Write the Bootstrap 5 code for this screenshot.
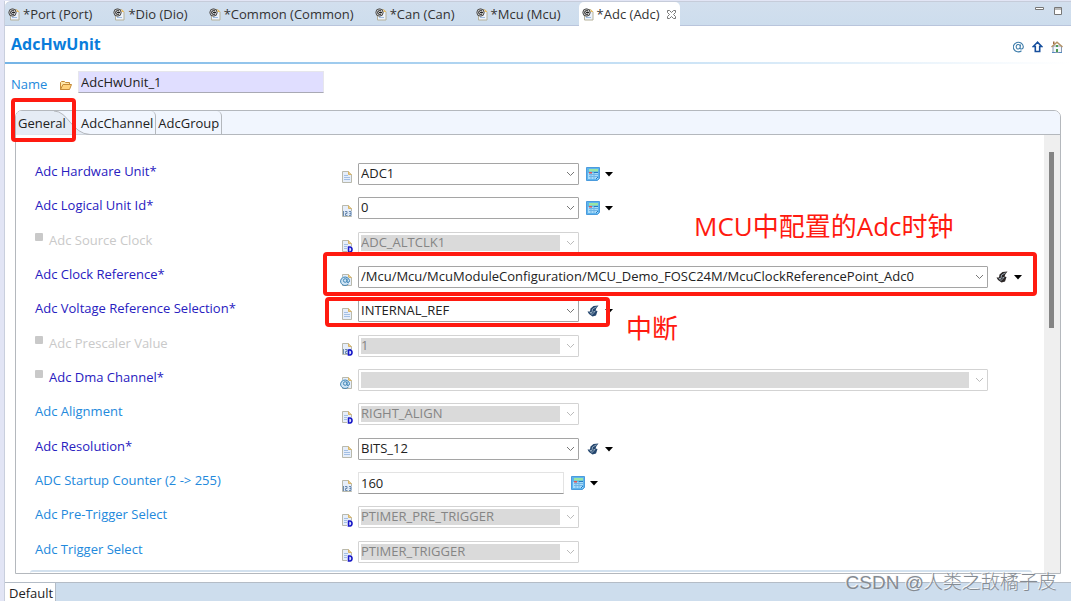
<!DOCTYPE html>
<html lang="en">
<head>
<meta charset="utf-8">
<meta name="viewport" content="width=device-width, initial-scale=1">
<title>AdcHwUnit</title>
<link href="https://cdn.jsdelivr.net/npm/bootstrap@5.3.0/dist/css/bootstrap.min.css" rel="stylesheet">
<style>
:root{--strip:#cddded;--edge:#b4b8bd;--mark:#ff1a10;--ui:"Open Sans","Noto Sans CJK SC",sans-serif}
body{background:#e2e5f5;font-family:var(--ui);font-size:13px;line-height:20px;color:#222;padding:1px 0 0 4px}
button,input,select{font:inherit;color:inherit}
svg{display:block;flex:none}
.editor{min-height:calc(100vh - 1px);background:#fff;border-left:1px solid #c9cfdd}
.editor-tabs{height:25px;background:linear-gradient(#d2dfee,var(--strip));border-top:1px solid #c6ccda;border-bottom:1px solid #b9c5dc;border-radius:6px 0 0 0}
.etab{border:0;background:none;padding:0 18px 0 3px;height:24px;gap:3px;color:#333;white-space:nowrap}
.etab.current{background:#fff;border-radius:5px 5px 0 0;padding-right:4px}
.win-tools{padding:3px 6px 0 0}
.head{padding:7px 8px 0 6px;height:36px}
.head h1{font-size:16px;line-height:22px;font-weight:700;color:#0a7ddb;margin:0}
.rule{height:2px;background:linear-gradient(90deg,#74b4e6,#fff)}
.c-blue{color:#2389dc}.c-req{color:#2820c0}.c-off{color:#c9c9c9}
.name-row{padding:7px 6px 0;height:46px}
.name-row label{width:49px;padding-top:3px}
.name-field{width:246px;height:22px;border:1px solid #e6e6ec;border-bottom:1px solid #a9a9b4;background:#e0deff;padding:0 2px;margin-left:6px}
.folder{margin:0 10px;border:1px solid var(--edge);border-radius:7px 7px 0 0}
.folder-tabs{height:24px;background:#f1f6fe;border-bottom:1px solid var(--edge);border-radius:6px 6px 0 0}
.ftab{border:0;background:none;padding:0 2px;height:24px}
.ftab.edge{border-right:1px solid var(--edge);border-radius:0 5px 0 0}
.ftab.first{width:63px;text-align:left;position:relative}
.curve{position:absolute;left:0;top:0;pointer-events:none}
.pane{padding:28px 0 0 19px}
.prop{height:34px}
.prop:nth-child(3n+2){height:35px}
.prop:last-child{height:28px}
.prop label,.lab{width:304px;line-height:16px}
.prop .lab label{width:auto}
.lab input{appearance:none;width:8px;height:8px;margin:1px 6px 0 0;background:#c9c9c9;border-radius:1px}
.kind{margin:7px 5px 0 0}
.combo{appearance:none;width:221px;height:22px;border:1px solid #a5a5a5;border-radius:1px;padding:0 20px 2px 2px;line-height:18px;color:#222;background:#fff url("data:image/svg+xml,%3Csvg xmlns='http://www.w3.org/2000/svg' width='9' height='6'%3E%3Cpath d='M1 1l3.5 3.5L8 1' fill='none' stroke='%23777'/%3E%3C/svg%3E") no-repeat right 3px center}
.combo:disabled{opacity:1;color:#858585;border-color:#d3d3d3;background:url("data:image/svg+xml,%3Csvg xmlns='http://www.w3.org/2000/svg' width='9' height='6'%3E%3Cpath d='M1 1l3.5 3.5L8 1' fill='none' stroke='%23bbb'/%3E%3C/svg%3E") no-repeat right 3px center,linear-gradient(#dadada,#dadada) no-repeat 2px 2px/calc(100% - 20px) calc(100% - 4px) #fff}
.combo.wide{flex:1 1 0;min-width:0}
.num{width:206px;height:22px;border:1px solid #e3e3e3;border-bottom-color:#999;padding:0 2px}
.act{border:0;background:none;padding:0;height:22px;margin-left:7px;gap:5px}
.tail{width:56px}
.track{width:16px;background:#efefef;padding-top:17px}
.thumb{width:5px;height:176px;background:#858585;margin-left:5px}
.next-group{border-top:2px solid #d3e1ee;border-radius:3px 3px 0 0;margin:1px 12px 0 14px;height:3px}
.foot{height:21px;margin-top:8px;background:var(--strip);border-top:1px solid #b4bcc6}
.foot button{border:0;background:#fff;border-right:1px solid #b4bcc6;padding:0 2px 0 4px;height:20px}
.frame{position:absolute;border:4px solid var(--mark);border-radius:4px;pointer-events:none}
.note{position:absolute;color:var(--mark);font-size:26px;line-height:32px;white-space:nowrap}
.f-tab{left:-5px;top:-13px;width:65px;height:44px}
.f-clock{left:288px;right:7px;top:-14px;height:44px}
.f-volt{left:290px;width:285px;top:-3px;height:30px}
.n-clock{left:659px;top:-56px}.n-volt{left:591px;top:12px}
.stamp{position:absolute;right:14px;bottom:6px;font:300 19px/28px "Liberation Sans","Noto Sans CJK SC",sans-serif;color:#858b92;text-shadow:-1px -1px 0 #f4f7fa}
</style>
</head>
<body>
<svg width="0" height="0" class="position-absolute" aria-hidden="true">
 <symbol id="paper" viewBox="0 0 14 14"><path d="M3.500 1.500h6l3 3v8h-9z" fill="#e6eefa" stroke="#b9b9ac"/><path d="M9.500 1.500v3h3" fill="#f0cf85" stroke="#d9b468"/></symbol>
 <symbol id="i-doc" viewBox="0 0 14 14"><use href="#paper"/><path d="M5 5.500h4M5 7.500h6M5 9.500h6" stroke="#a3bfe4"/></symbol>
 <symbol id="i-int" viewBox="0 0 14 14"><use href="#paper"/><path d="M4 7h9v5H4z" fill="#dce8f5"/><path d="M4.500 7v5M6 7.500h2v2H6.500v2H8.500M10 7.500h2v4h-2M10.500 9.500H12" fill="none" stroke="#5d7fa8" stroke-width=".9"/></symbol>
 <symbol id="i-d" viewBox="0 0 14 14"><use href="#i-doc"/><path d="M8 7h3q3 0 3 3.500T11 14H8z" fill="#fff"/><path d="M9.500 8v5H11q2-.2 2-2.500T11 8z" fill="#dfe3ff" stroke="#1717c6" stroke-width="1.600"/></symbol>
 <symbol id="i-intd" viewBox="0 0 14 14"><use href="#i-int"/><path d="M9.500 8v5H11q2-.2 2-2.500T11 8z" fill="#dfe3ff" stroke="#1717c6" stroke-width="1.600"/></symbol>
 <symbol id="i-ref" viewBox="0 0 14 14"><use href="#paper"/><circle cx="6" cy="7.500" r="4.500" fill="#cfe5f5"/><path d="M9.500 11a4.500 4.200 0 1 1 1-3.500q0 2-1.500 2T8 8V5.500M8 7.500a1.800 1.800 0 1 1-3.600 0 1.800 1.800 0 0 1 3.600 0" fill="none" stroke="#4285b5"/></symbol>
 <symbol id="i-cfg" viewBox="0 0 12 13"><path d="M2.500 1.500h6l2.500 2.500v8H2.500z" fill="#edf3fb" stroke="#b5b19a"/><path d="M8.500 1v3h3" fill="#e9bd62"/><path d="M4 9.500h5" stroke="#9dbbe0"/><circle cx="4.500" cy="4.500" r="3.700" fill="#c4c4c4" stroke="#505050"/><path d="M6 6a2 2 0 1 1 0-3M4 4.500h3" fill="none" stroke="#222"/></symbol>
 <symbol id="i-calc" viewBox="0 0 14 14"><path d="M.5.5h13v11l-2 2H.5z" fill="#5eb4ed" stroke="#4a9bdd"/><path d="M3 2h9v2.500H3z" fill="#9be5a4"/><path d="M2 6h10v6H2z" fill="#a9dcfa"/><path d="M3 7.500h9M3 9.500h9M5 6v6M8 6v6" stroke="#6fb4e6"/><path d="M3 5h3v1.500H3z" fill="#e05555"/><path d="M8 5.500h4M10 12l2-2" stroke="#267ac4"/></symbol>
 <symbol id="i-bolt" viewBox="0 0 14 14"><path d="M12.500 1.500 7.500 2 4.500 4.500 4 7.500H1.500L3 10l3.500 2.500 3.500-1L11.500 7 9.500 6.500 10.500 4z" fill="currentColor"/><path d="M10.500 2.800 6.500 5 6 8.500H4l2 2 3-3H7.500" fill="none" stroke="#a9bccb" stroke-width=".8"/></symbol>
 <symbol id="i-down" viewBox="0 0 8 5"><path d="M0 0h8L4 4.500z" fill="#000"/></symbol>
</svg>

<main class="editor d-flex flex-column position-relative">
 <nav class="editor-tabs d-flex">
  <button class="etab d-flex align-items-center"><svg width="12" height="13"><use href="#i-cfg"/></svg>*Port (Port)</button>
  <button class="etab d-flex align-items-center"><svg width="12" height="13"><use href="#i-cfg"/></svg>*Dio (Dio)</button>
  <button class="etab d-flex align-items-center"><svg width="12" height="13"><use href="#i-cfg"/></svg>*Common (Common)</button>
  <button class="etab d-flex align-items-center"><svg width="12" height="13"><use href="#i-cfg"/></svg>*Can (Can)</button>
  <button class="etab d-flex align-items-center"><svg width="12" height="13"><use href="#i-cfg"/></svg>*Mcu (Mcu)</button>
  <button class="etab current d-flex align-items-center"><svg width="12" height="13"><use href="#i-cfg"/></svg>*Adc (Adc)<svg class="ms-1" width="9" height="9" fill="#fff" stroke="#777"><path d="M.5.5h2l2 2 2-2h2v2l-2 2 2 2v2h-2l-2-2-2 2h-2v-2l2-2-2-2z"/></svg></button>
  <div class="win-tools ms-auto d-flex gap-2 pe-2">
   <svg width="10" height="10" fill="#fff" stroke="#777"><path d="M.5 2.500h8v2h-8z"/></svg>
   <svg width="10" height="11" fill="#fff" stroke="#777"><path d="M1.500 2.500h7v7h-7zM1.500 4h7"/></svg>
  </div>
 </nav>

 <header class="head d-flex justify-content-between">
  <h1>AdcHwUnit</h1>
  <div class="d-flex gap-2 pt-2">
   <svg width="11" height="12" fill="none" stroke="#3d7caa" stroke-width="1.100"><path d="M8.500 9.800A5 4.800 0 1 1 10.300 5.500Q10.300 8 8.500 8T7.200 6.500L7.500 3.500M7.200 5.500a2 2.300 0 1 1-4 .5 2 2.300 0 0 1 4-.5"/></svg>
   <svg width="11" height="12" fill="#fff" stroke="#174f9d" stroke-width="1.600"><path d="M5.500 1.200 1.300 5.500h2v5h4.400v-5h2z"/></svg>
   <svg width="12" height="12"><path d="M2 5h8.500v6.500H2z" fill="#f3f6fc" stroke="#8799b3"/><path d="M.5 6 6 1.200 11.500 6" fill="none" stroke="#b59468" stroke-width="1.500"/><path d="M2 .5h1.500V3H2z" fill="#9c6b41"/><path d="M5 4h2v2H5zM5 8h2v3H5z" fill="#4c9c50"/><path d="M1 11.500h3M8 11.500h3" stroke="#568bc0"/></svg>
  </div>
 </header>
 <div class="rule"></div>

 <div class="name-row d-flex">
  <label for="unit" class="c-blue">Name</label>
  <svg class="mt-2" width="12" height="12" stroke="#c58a38"><path d="M.5 10.500v-7l1-1h3l1 1h4v2h-6z" fill="#ffe7a8"/><path d="M.5 10.500 3 5.500h8.500l-2 5z" fill="#ffd27c"/></svg>
  <input id="unit" class="name-field" value="AdcHwUnit_1">
 </div>

 <section class="folder d-flex flex-column flex-grow-1">
  <div class="folder-tabs d-flex position-relative">
   <button class="ftab first"><svg class="curve" width="78" height="24"><path d="M0 24V6q0-6 6-6h32c14 0 18 23 36 23.500z" fill="#e5ecf5"/><path d="M38 0c14 0 18 23 36 23.500" fill="none" stroke="#b4b8bd"/></svg><span class="position-relative">General</span></button>
   <button class="ftab edge">AdcChannel</button>
   <button class="ftab edge">AdcGroup</button>
   <span class="frame f-tab"></span>
  </div>
  <div class="d-flex flex-grow-1">
   <div class="flex-grow-1 d-flex flex-column">
   <form class="pane flex-grow-1">
    <div class="prop d-flex"><label for="p1" class="c-req">Adc Hardware Unit*</label><svg class="kind" width="14" height="14"><use href="#i-doc"/></svg><select id="p1" class="combo"><option>ADC1</option></select><button type="button" class="act d-flex align-items-center" aria-label="Calculate"><svg width="14" height="14"><use href="#i-calc"/></svg><svg width="8" height="5"><use href="#i-down"/></svg></button></div>
    <div class="prop d-flex"><label for="p2" class="c-req">Adc Logical Unit Id*</label><svg class="kind" width="14" height="14"><use href="#i-int"/></svg><select id="p2" class="combo"><option>0</option></select><button type="button" class="act d-flex align-items-center" aria-label="Calculate"><svg width="14" height="14"><use href="#i-calc"/></svg><svg width="8" height="5"><use href="#i-down"/></svg></button></div>
    <div class="prop d-flex"><div class="lab d-flex"><input type="checkbox" disabled aria-label="Enable source clock"><label for="p3" class="c-off">Adc Source Clock</label></div><svg class="kind" width="14" height="14"><use href="#i-d"/></svg><select id="p3" class="combo" disabled><option>ADC_ALTCLK1</option></select></div>
    <div class="prop d-flex position-relative"><label for="p4" class="c-req">Adc Clock Reference*</label><svg class="kind" width="14" height="14"><use href="#i-ref"/></svg><select id="p4" class="combo wide"><option>/Mcu/Mcu/McuModuleConfiguration/MCU_Demo_FOSC24M/McuClockReferencePoint_Adc0</option></select><div class="tail"><button type="button" class="act d-flex align-items-center" aria-label="Go to reference"><svg width="14" height="14" color="#2b2626"><use href="#i-bolt"/></svg><svg width="8" height="5"><use href="#i-down"/></svg></button></div><span class="frame f-clock"></span><span class="note n-clock">MCU中配置的Adc时钟</span></div>
    <div class="prop d-flex position-relative"><label for="p5" class="c-req">Adc Voltage Reference Selection*</label><svg class="kind" width="14" height="14"><use href="#i-doc"/></svg><select id="p5" class="combo"><option>INTERNAL_REF</option></select><button type="button" class="act d-flex align-items-center" aria-label="Choose"><svg width="14" height="14" color="#24466e"><use href="#i-bolt"/></svg><svg width="8" height="5"><use href="#i-down"/></svg></button><span class="frame f-volt"></span><span class="note n-volt">中断</span></div>
    <div class="prop d-flex"><div class="lab d-flex"><input type="checkbox" disabled aria-label="Enable prescaler"><label for="p6" class="c-off">Adc Prescaler Value</label></div><svg class="kind" width="14" height="14"><use href="#i-intd"/></svg><select id="p6" class="combo" disabled><option>1</option></select></div>
    <div class="prop d-flex"><div class="lab d-flex"><input type="checkbox" disabled aria-label="Enable DMA channel"><label for="p7" class="c-req">Adc Dma Channel*</label></div><svg class="kind" width="14" height="14"><use href="#i-ref"/></svg><select id="p7" class="combo wide" disabled><option></option></select><div class="tail"></div></div>
    <div class="prop d-flex"><label for="p8" class="c-blue">Adc Alignment</label><svg class="kind" width="14" height="14"><use href="#i-d"/></svg><select id="p8" class="combo" disabled><option>RIGHT_ALIGN</option></select></div>
    <div class="prop d-flex"><label for="p9" class="c-req">Adc Resolution*</label><svg class="kind" width="14" height="14"><use href="#i-doc"/></svg><select id="p9" class="combo"><option>BITS_12</option></select><button type="button" class="act d-flex align-items-center" aria-label="Choose"><svg width="14" height="14" color="#24466e"><use href="#i-bolt"/></svg><svg width="8" height="5"><use href="#i-down"/></svg></button></div>
    <div class="prop d-flex"><label for="p10" class="c-blue">ADC Startup Counter (2 -&gt; 255)</label><svg class="kind" width="14" height="14"><use href="#i-int"/></svg><input id="p10" class="num" value="160"><button type="button" class="act d-flex align-items-center" aria-label="Calculate"><svg width="14" height="14"><use href="#i-calc"/></svg><svg width="8" height="5"><use href="#i-down"/></svg></button></div>
    <div class="prop d-flex"><label for="p11" class="c-blue">Adc Pre-Trigger Select</label><svg class="kind" width="14" height="14"><use href="#i-d"/></svg><select id="p11" class="combo" disabled><option>PTIMER_PRE_TRIGGER</option></select></div>
    <div class="prop d-flex"><label for="p12" class="c-blue">Adc Trigger Select</label><svg class="kind" width="14" height="14"><use href="#i-d"/></svg><select id="p12" class="combo" disabled><option>PTIMER_TRIGGER</option></select></div>
   </form>
   <div class="next-group"></div>
   </div>
   <div class="track"><div class="thumb"></div></div>
  </div>
 </section>

 <footer class="foot d-flex"><button>Default</button></footer>
 <span class="stamp">CSDN @人类之敌橘子皮</span>
</main>
<script src="https://cdn.jsdelivr.net/npm/bootstrap@5.3.0/dist/js/bootstrap.bundle.min.js"></script>
</body>
</html>
